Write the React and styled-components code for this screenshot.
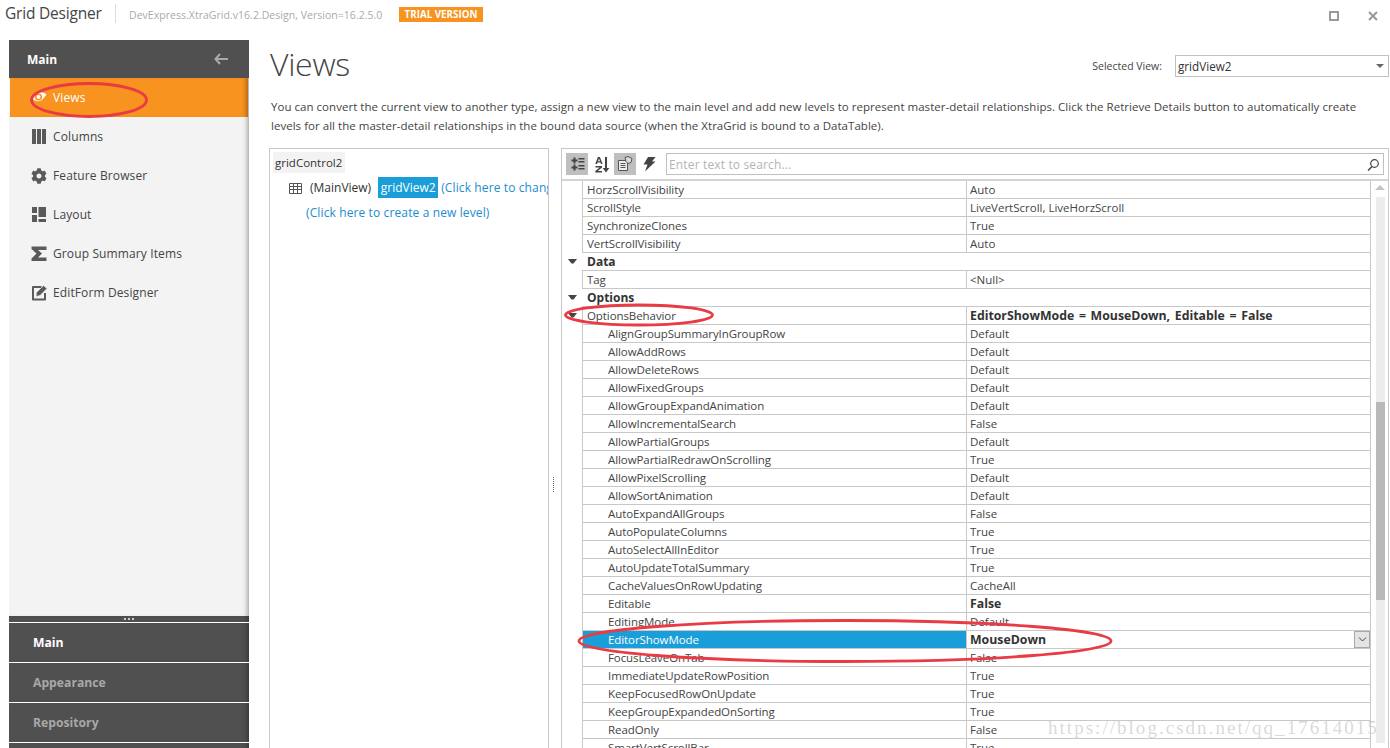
import React from "react"
import styled, { createGlobalStyle, css } from "styled-components"
import { FaCog } from "react-icons/fa"

const GlobalStyle = createGlobalStyle`
  * { box-sizing: border-box; }
  html, body { margin: 0; padding: 0; background: #fff; }
  body { font-family: "Open Sans", "Noto Sans", sans-serif; font-size: 12px; color: #333; }
`

const edgeShade = css`
  box-shadow: inset -5px 0 4px -3px rgba(0, 0, 0, 0.3);
`

const Page = styled.div`
  position: relative;
  width: 1390px;
  height: 748px;
  overflow: hidden;
  background: #fff;
  display: flex;
  flex-direction: column;
`

const Header = styled.header`
  height: 40px;
  flex: none;
  display: flex;
  align-items: flex-start;
  padding: 4px 12px 0 5px;
`

const AppTitle = styled.div`
  font-size: 15.5px;
  line-height: 19px;
  color: #444;
  width: 110px;
  letter-spacing: -0.2px;
`

const Divider = styled.div`
  width: 1px;
  height: 19px;
  background: #ddd;
  margin-right: 13px;
`

const Version = styled.div`
  font-size: 10.5px;
  line-height: 22px;
  color: #aaa;
  width: 270px;
  white-space: nowrap;
  letter-spacing: 0.03px;
`

const Badge = styled.div`
  width: 84px;
  height: 15px;
  margin-top: 3px;
  background: #f7931e;
  color: #fff;
  font-size: 9.8px;
  font-weight: 700;
  line-height: 15px;
  text-align: center;
`

const WindowButtons = styled.div`
  margin-left: auto;
  display: flex;
  gap: 29px;
  padding-top: 7px;
  color: #999;
`

const Body = styled.div`
  flex: 1;
  min-height: 0;
  display: flex;
`

const Sidebar = styled.aside`
  width: 240px;
  margin-left: 9px;
  flex: none;
  display: flex;
  flex-direction: column;
  background: #505050;
`

const SideHead = styled.div`
  height: 38px;
  flex: none;
  display: flex;
  align-items: center;
  justify-content: space-between;
  padding: 0 21px 0 18px;
  color: #fff;
  font-size: 12px;
  font-weight: 700;
`

const SideList = styled.nav`
  height: 538px;
  flex: none;
  background: #f3f3f3;
  ${edgeShade}
`

const SideItem = styled.div`
  height: 39px;
  display: flex;
  align-items: center;
  gap: 5px;
  padding-left: ${(p) => (p.$active ? "21px" : "22px")};
  margin: ${(p) => (p.$active ? "0 1px" : "0")};
  font-size: 12px;
  letter-spacing: 0.12px;
  color: ${(p) => (p.$active ? "#fff" : "#444")};
  background: ${(p) => (p.$active ? "#f7931e" : "transparent")};
  ${(p) => p.$active && edgeShade}
`

const IconBox = styled.span`
  width: 17px;
  height: 17px;
  flex: none;
  display: flex;
  align-items: center;
  justify-content: flex-start;
  color: ${(p) => (p.$light ? "#fff" : "#5a5a5a")};

  svg {
    flex: none;
  }
`

const Grip = styled.div`
  height: 6px;
  flex: none;
  display: flex;
  justify-content: center;
  align-items: center;
  gap: 2px;
  ${edgeShade}

  i {
    width: 2px;
    height: 2px;
    background: #ccc;
  }
`

const SideTab = styled.div`
  height: 40px;
  flex: none;
  border-top: 1px solid #fff;
  padding-left: 24px;
  display: flex;
  align-items: center;
  font-size: 12.2px;
  font-weight: 700;
  color: ${(p) => (p.$active ? "#fff" : "#a8a8a8")};
  ${edgeShade}
`

const Main = styled.main`
  flex: 1;
  min-width: 0;
  padding: 0 1px 0 20px;
  display: flex;
  flex-direction: column;
`

const TitleRow = styled.div`
  height: 50px;
  flex: none;
  display: flex;
  align-items: center;
  justify-content: space-between;
`

const PageTitle = styled.h1`
  margin: 0 0 4px 1px;
  font-size: 32px;
  font-weight: 300;
  color: #444;
  letter-spacing: -0.3px;
`

const ViewPicker = styled.div`
  display: flex;
  align-items: center;
  gap: 13px;
  font-size: 10.5px;
  color: #444;
  margin-top: 2px;
`

const Combo = styled.div`
  width: 214px;
  height: 22px;
  border: 1px solid #c0c0c0;
  padding: 0 2px;
  display: flex;
  align-items: center;
  justify-content: space-between;
  font-size: 11.7px;
  color: #333;
`

const DownArrow = styled.span`
  width: 0;
  height: 0;
  margin-right: 2px;
  border-left: 4px solid transparent;
  border-right: 4px solid transparent;
  border-top: 4px solid ${(p) => p.$color || "#666"};
`

const Description = styled.p`
  margin: 7px 0 0 2px;
  flex: none;
  font-size: 11.5px;
  line-height: 19px;
  letter-spacing: 0.03px;
  color: #444;
  white-space: nowrap;
`

const Panels = styled.div`
  height: 620px;
  flex: none;
  margin-top: 13px;
  display: flex;
`

const TreePanel = styled.section`
  width: 280px;
  flex: none;
  border: 1px solid #c8c8c8;
  border-bottom: 0;
  padding: 3px;
  overflow: hidden;
  font-size: 12px;
`

const TreeRoot = styled.span`
  display: inline-block;
  background: #f3f3f3;
  height: 21px;
  line-height: 21px;
  padding: 0 3px 0 2px;
  font-size: 11.5px;
`

const TreeRow = styled.div`
  display: flex;
  align-items: center;
  white-space: nowrap;
  height: 21px;
  margin-top: ${(p) => p.$gap || 4}px;
  padding-left: ${(p) => p.$indent}px;
`

const TreeIcon = styled.span`
  width: 13px;
  height: 12px;
  margin-right: 8px;
  display: flex;
  color: #555;
`

const TreeViewName = styled.span`
  background: #1a9ed9;
  color: #fff;
  height: 21px;
  line-height: 21px;
  width: 60px;
  text-align: center;
  margin: 0 3px 0 7px;
  flex: none;
`

const TreeLink = styled.span`
  color: #1a8ed0;
  letter-spacing: 0.12px;
`

const PanelSplit = styled.div`
  width: 12px;
  flex: none;
  display: flex;
  justify-content: flex-start;
  padding: 329px 0 0 4px;

  i {
    display: block;
    width: 1px;
    height: 15px;
    background: repeating-linear-gradient(to bottom, #666 0 1px, transparent 1px 2px);
  }
`

const PropertyPanel = styled.section`
  flex: 1;
  min-width: 0;
  border: 1px solid #c8c8c8;
  border-bottom: 0;
  display: flex;
  flex-direction: column;
  overflow: hidden;
`

const Toolbar = styled.div`
  height: 30px;
  flex: none;
  display: flex;
  align-items: center;
  padding: 0 4px;
  border-bottom: 2px solid #d4d4d4;
  box-sizing: content-box;
`

const ToolButton = styled.button`
  width: 22px;
  height: 22px;
  border: 0;
  padding: 0;
  flex: none;
  margin-right: ${(p) => p.$gap || 0}px;
  display: flex;
  align-items: center;
  justify-content: center;
  background: ${(p) => (p.$on ? "#bfbfbf" : "transparent")};
  color: #444;
`

const SearchBox = styled.div`
  flex: 1;
  height: 22px;
  margin-left: 6px;
  border: 1px solid #c0c0c0;
  padding: 0 3px 0 2px;
  display: flex;
  align-items: center;
  justify-content: space-between;
  color: #b4b4b4;
  font-size: 12px;
  letter-spacing: 0.15px;
`

const GridArea = styled.div`
  flex: 1;
  min-height: 0;
  display: flex;
`

const Rows = styled.div`
  width: 809px;
  flex: none;
  border-right: 1px solid #c8c8c8;
  overflow: hidden;
`

const Row = styled.div`
  height: 18px;
  display: grid;
  grid-template-columns: 20px 384px 1fr;
  font-size: 11.5px;
  line-height: 17px;
  color: #444;
  white-space: nowrap;
`

const ExpandCell = styled.div`
  display: flex;
  align-items: center;
  justify-content: center;
  padding-bottom: 1px;
`

const NameCell = styled.div`
  border-left: 1px solid #c8c8c8;
  border-bottom: 1px solid #c8c8c8;
  padding-left: ${(p) => (p.$child ? 25 : 4)}px;
  letter-spacing: -0.08px;
  background: ${(p) => (p.$selected ? "#1a9ed9" : "transparent")};
  color: ${(p) => (p.$selected ? "#fff" : "inherit")};
`

const ValueCell = styled.div`
  position: relative;
  border-left: 1px solid #c8c8c8;
  border-bottom: 1px solid #c8c8c8;
  padding-left: 3px;
  font-size: ${(p) => (p.$bold ? "12.3px" : "11.5px")};
  word-spacing: ${(p) => (p.$bold ? "1.5px" : "0")};
  font-weight: ${(p) => (p.$bold ? 700 : 400)};
  color: ${(p) => (p.$bold ? "#333" : "inherit")};
`

const CategoryCell = styled.div`
  grid-column: 2 / 4;
  border-bottom: 1px solid #c8c8c8;
  padding-left: 5px;
  font-size: 12px;
  font-weight: 700;
  color: #333;
`

const EditorButton = styled.span`
  position: absolute;
  top: 0;
  right: 0;
  width: 16px;
  height: 17px;
  background: #e4e4e4;
  border: 1px solid #a8a8a8;
  display: flex;
  align-items: center;
  justify-content: center;
  color: #444;
`

const ScrollBar = styled.div`
  width: 18px;
  flex: none;
  padding: 4px 4px 0;
  display: flex;
  flex-direction: column;
  align-items: center;
`

const ScrollUp = styled.span`
  width: 0;
  height: 0;
  border-left: 5px solid transparent;
  border-right: 5px solid transparent;
  border-bottom: 5px solid #c4c4c4;
  margin-bottom: 7px;
`

const ScrollTrack = styled.div`
  width: 9px;
  height: 546px;
  padding-top: 205px;
  background: #ececec;

  i {
    display: block;
    height: 198px;
    background: #b9b9b9;
  }
`

const Annotation = styled.svg`
  position: absolute;
  left: 0;
  top: 0;
  pointer-events: none;
`

const Watermark = styled.div`
  position: absolute;
  left: 1048px;
  top: 717px;
  font-family: "Liberation Serif", serif;
  font-size: 19px;
  line-height: 22px;
  letter-spacing: 2.03px;
  color: rgba(170, 170, 170, 0.45);
  white-space: nowrap;
`

const navItems = [
  { label: "Views", icon: "eye", active: true },
  { label: "Columns", icon: "columns" },
  { label: "Feature Browser", icon: "gear" },
  { label: "Layout", icon: "layout" },
  { label: "Group Summary Items", icon: "sigma" },
  { label: "EditForm Designer", icon: "edit" },
]

const rows = [
  { name: "HorzScrollVisibility", value: "Auto" },
  { name: "ScrollStyle", value: "LiveVertScroll, LiveHorzScroll" },
  { name: "SynchronizeClones", value: "True" },
  { name: "VertScrollVisibility", value: "Auto" },
  { category: "Data" },
  { name: "Tag", value: "<Null>" },
  { category: "Options" },
  { name: "OptionsBehavior", value: "EditorShowMode = MouseDown, Editable = False", bold: true, open: true },
  { name: "AlignGroupSummaryInGroupRow", value: "Default", child: true },
  { name: "AllowAddRows", value: "Default", child: true },
  { name: "AllowDeleteRows", value: "Default", child: true },
  { name: "AllowFixedGroups", value: "Default", child: true },
  { name: "AllowGroupExpandAnimation", value: "Default", child: true },
  { name: "AllowIncrementalSearch", value: "False", child: true },
  { name: "AllowPartialGroups", value: "Default", child: true },
  { name: "AllowPartialRedrawOnScrolling", value: "True", child: true },
  { name: "AllowPixelScrolling", value: "Default", child: true },
  { name: "AllowSortAnimation", value: "Default", child: true },
  { name: "AutoExpandAllGroups", value: "False", child: true },
  { name: "AutoPopulateColumns", value: "True", child: true },
  { name: "AutoSelectAllInEditor", value: "True", child: true },
  { name: "AutoUpdateTotalSummary", value: "True", child: true },
  { name: "CacheValuesOnRowUpdating", value: "CacheAll", child: true },
  { name: "Editable", value: "False", child: true, bold: true },
  { name: "EditingMode", value: "Default", child: true },
  { name: "EditorShowMode", value: "MouseDown", child: true, bold: true, selected: true },
  { name: "FocusLeaveOnTab", value: "False", child: true },
  { name: "ImmediateUpdateRowPosition", value: "True", child: true },
  { name: "KeepFocusedRowOnUpdate", value: "True", child: true },
  { name: "KeepGroupExpandedOnSorting", value: "True", child: true },
  { name: "ReadOnly", value: "False", child: true },
  { name: "SmartVertScrollBar", value: "True", child: true },
]

const NavIcon = ({ type }) => {
  if (type === "gear") return <FaCog size={16} />
  const shapes = {
    eye: (
      <>
        <path d="M0.500 8.500C4 3 11 1.500 15.500 5.500L13.500 8C10.500 13.500 4 13.500 0.500 8.500Z" fill="currentColor" />
        <circle cx="7.500" cy="8" r="3.600" fill="#f7931e" />
        <circle cx="7.500" cy="8" r="2" fill="currentColor" />
      </>
    ),
    columns: <path d="M1 1h4v15H1zM6 1h4v15H6zM11 1h4v15h-4z" fill="currentColor" />,
    layout: <path d="M1 1h5v6H1zM1 9h5v7H1zM7.500 1H15v10H7.500zM7.500 13H15v3H7.500z" fill="currentColor" />,
    sigma: <path d="M0.500 1.500h15v3.500H7l4 3.500L7 12.500h8.500v3.500H0.500v-2.500L5.500 8.500 0.500 4z" fill="currentColor" />,
    edit: (
      <>
        <path d="M10.500 3H2v12.500h12V9" fill="none" stroke="currentColor" strokeWidth="2" strokeLinejoin="round" />
        <path d="M5.500 8.500L12.500 1.500 16 4.500 9 11.500 5 12.500Z" fill="currentColor" stroke="#f3f3f3" strokeWidth="0.600" />
      </>
    ),
  }
  return (
    <svg width="16" height="17" viewBox="0 0 16 17">
      {shapes[type]}
    </svg>
  )
}

const Arrow = () => (
  <svg width="9" height="5" viewBox="0 0 9 5">
    <path d="M0 0h9L5.500 4.500h-2z" fill="#444" />
  </svg>
)

const PropertyRow = ({ row }) => {
  if (row.category) {
    return (
      <Row>
        <ExpandCell>
          <Arrow />
        </ExpandCell>
        <CategoryCell>{row.category}</CategoryCell>
      </Row>
    )
  }
  return (
    <Row>
      <ExpandCell>{row.open && <Arrow />}</ExpandCell>
      <NameCell $child={row.child} $selected={row.selected}>
        {row.name}
      </NameCell>
      <ValueCell $bold={row.bold}>
        {row.value}
        {row.selected && (
          <EditorButton>
            <svg width="9" height="5" viewBox="0 0 9 5">
              <path d="M1 0.500l3.500 3.500L8 0.500" fill="none" stroke="currentColor" />
            </svg>
          </EditorButton>
        )}
      </ValueCell>
    </Row>
  )
}

export default function App() {
  return (
    <Page>
      <GlobalStyle />
      <Header>
        <AppTitle>Grid Designer</AppTitle>
        <Divider />
        <Version>DevExpress.XtraGrid.v16.2.Design, Version=16.2.5.0</Version>
        <Badge>TRIAL VERSION</Badge>
        <WindowButtons>
          <svg width="10" height="10" viewBox="0 0 10 10">
            <rect x="1" y="1" width="8" height="8" fill="none" stroke="currentColor" strokeWidth="2" />
          </svg>
          <svg width="10" height="10" viewBox="0 0 10 10">
            <path d="M1 1l8 8M9 1l-8 8" stroke="currentColor" strokeWidth="2" />
          </svg>
        </WindowButtons>
      </Header>
      <Body>
        <Sidebar>
          <SideHead>
            Main
            <svg width="14" height="12" viewBox="0 0 14 12">
              <path d="M6 1L1.500 6 6 11M2 6h12" fill="none" stroke="#aaa" strokeWidth="2" />
            </svg>
          </SideHead>
          <SideList>
            {navItems.map((item) => (
              <SideItem key={item.label} $active={item.active}>
                <IconBox $light={item.active}>
                  <NavIcon type={item.icon} />
                </IconBox>
                {item.label}
              </SideItem>
            ))}
          </SideList>
          <Grip>
            <i />
            <i />
            <i />
          </Grip>
          <SideTab $active>Main</SideTab>
          <SideTab>Appearance</SideTab>
          <SideTab>Repository</SideTab>
          <SideTab />
        </Sidebar>
        <Main>
          <TitleRow>
            <PageTitle>Views</PageTitle>
            <ViewPicker>
              Selected View:
              <Combo>
                gridView2
                <DownArrow />
              </Combo>
            </ViewPicker>
          </TitleRow>
          <Description>
            You can convert the current view to another type, assign a new view to the main level and add new levels to represent master-detail relationships. Click the Retrieve Details button to automatically create
            <br />
            levels for all the master-detail relationships in the bound data source (when the XtraGrid is bound to a DataTable).
          </Description>
          <Panels>
            <TreePanel>
              <TreeRoot>gridControl2</TreeRoot>
              <TreeRow $indent={16}>
                <TreeIcon>
                  <svg width="13" height="12" viewBox="0 0 13 12">
                    <path d="M0.500 1.500h12v10h-12zM0.500 4.500h12M0.500 7.500h12M4.500 1.500v10M8.500 1.500v10" fill="none" stroke="currentColor" />
                  </svg>
                </TreeIcon>
                (MainView)
                <TreeViewName>gridView2</TreeViewName>
                <TreeLink>(Click here to change view)</TreeLink>
              </TreeRow>
              <TreeRow $indent={33} $gap={4}>
                <TreeLink>(Click here to create a new level)</TreeLink>
              </TreeRow>
            </TreePanel>
            <PanelSplit>
              <i />
            </PanelSplit>
            <PropertyPanel>
              <Toolbar>
                <ToolButton $on $gap={3}>
                  <svg width="16" height="16" viewBox="0 0 16 16" fill="#444">
                    <path d="M2.500 3.500h2v-2h2v2h2v2h-2v2h-2v-2h-2zM9.500 2h6v1.500h-6zM9.500 5h6v1.500h-6zM2.500 10.500h2v-2h2v2h2v2h-2v2h-2v-2h-2zM9.500 9h6v1.500h-6zM9.500 12h6v1.500h-6z" />
                  </svg>
                </ToolButton>
                <ToolButton $gap={1}>
                  <svg width="16" height="17" viewBox="0 0 16 17" fill="#444">
                    <path d="M3.900 1h2l2.700 7H7l-.5-1.500h-3L3 8H1.300zM4 5.300h2L5 2.600zM1.500 10h6.500v1.400L3.800 15H8v1.400H1.300v-1.300L5.600 11.400H1.500z" />
                    <path d="M11 1h2v11h2.300L12 16.500 8.700 12H11z" />
                  </svg>
                </ToolButton>
                <ToolButton $on $gap={2}>
                  <svg width="18" height="18" viewBox="0 0 18 18">
                    <path d="M2.500 5.500h9v10h-9z" fill="#eee" stroke="#555" />
                    <path d="M4.500 8.500h5M4.500 10.500h5M4.500 12.500h5" stroke="#555" />
                    <path d="M9 2.500l3-1 4 2-1 4-3 1-2-2z" fill="#ddd" stroke="#555" />
                  </svg>
                </ToolButton>
                <ToolButton>
                  <svg width="14" height="16" viewBox="0 0 14 16" fill="#444">
                    <path d="M6 1h7.500L10 5.500h3.500L3 15.500l2.500-7H1.500z" />
                  </svg>
                </ToolButton>
                <SearchBox>
                  Enter text to search...
                  <svg width="13" height="13" viewBox="0 0 13 13">
                    <circle cx="7.500" cy="5.500" r="3.800" fill="none" stroke="#444" strokeWidth="1.200" />
                    <path d="M5 8.500L1 12.500" stroke="#444" strokeWidth="1.500" />
                  </svg>
                </SearchBox>
              </Toolbar>
              <GridArea>
                <Rows>
                  {rows.map((row) => (
                    <PropertyRow key={row.name || row.category} row={row} />
                  ))}
                </Rows>
                <ScrollBar>
                  <ScrollUp />
                  <ScrollTrack>
                    <i />
                  </ScrollTrack>
                </ScrollBar>
              </GridArea>
            </PropertyPanel>
          </Panels>
        </Main>
      </Body>
      <Annotation width="1390" height="748" viewBox="0 0 1390 748">
        <g fill="none" stroke="#ea3a44" strokeWidth="2.800">
          <ellipse cx="89" cy="100" rx="57.500" ry="16.500" />
          <ellipse cx="639" cy="315" rx="73.500" ry="10" />
          <ellipse cx="845" cy="641" rx="266" ry="20.500" />
        </g>
      </Annotation>
      <Watermark>https://blog.csdn.net/qq_17614015</Watermark>
    </Page>
  )
}
